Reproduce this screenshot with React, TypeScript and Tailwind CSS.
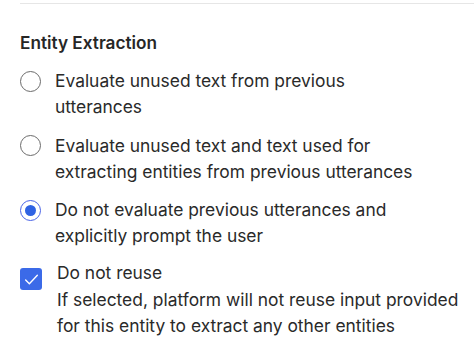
const options = [
  {
    label: "Evaluate unused text from previous utterances",
    checked: false,
  },
  {
    label:
      "Evaluate unused text and text used for extracting entities from previous utterances",
    checked: false,
  },
  {
    label: "Do not evaluate previous utterances and explicitly prompt the user",
    checked: true,
  },
];

function Radio({ checked }: { checked: boolean }) {
  return checked ? (
    <span className="mt-[2.5px] flex h-[21px] w-[21px] shrink-0 items-center justify-center rounded-full border-[1.5px] border-[#4a63e6]">
      <span className="h-[11px] w-[11px] rounded-full bg-[#2f62e3]" />
    </span>
  ) : (
    <span className="mt-[2.5px] h-[21px] w-[21px] shrink-0 rounded-full border-[1.5px] border-[#6b6b6b]" />
  );
}

export default function App() {
  return (
    <div className="h-[364px] w-[474px] overflow-hidden bg-white font-['Inter',sans-serif] text-[#2a2a2a]">
      <div className="ml-5 mt-[3px] border-t-[1.5px] border-[#e6e6e6]" />
      <div className="pl-5 pr-2 pt-[27px]">
        <h2 className="text-[17.2px] font-semibold leading-[24px] text-[#262626]">
          Entity Extraction
        </h2>
        <div className="mt-[13px] flex flex-col gap-[12.5px]">
          {options.map((o) => (
            <label key={o.label} className="flex items-start gap-[14px] pr-[40px]">
              <Radio checked={o.checked} />
              <span className="text-[17.4px] leading-[26px]">{o.label}</span>
            </label>
          ))}
          <label className="-mt-[1.5px] flex items-start gap-[15px]">
            <span className="mt-[8px] flex h-[22px] w-[22px] shrink-0 items-center justify-center rounded-[3px] bg-[#3b6ae8]">
              <svg viewBox="0 0 16 16" className="h-[17px] w-[17px]" fill="none">
                <path
                  d="M2.5 8.5l3.5 3.5 7.5-8"
                  stroke="white"
                  strokeWidth="1.3"
                  strokeLinecap="round"
                  strokeLinejoin="round"
                />
              </svg>
            </span>
            <span className="text-[17.4px] leading-[26.5px]">
              <span className="block">Do not reuse</span>
              <span className="block">
                If selected, platform will not reuse input provided for this
                entity to extract any other entities
              </span>
            </span>
          </label>
        </div>
      </div>
    </div>
  );
}
